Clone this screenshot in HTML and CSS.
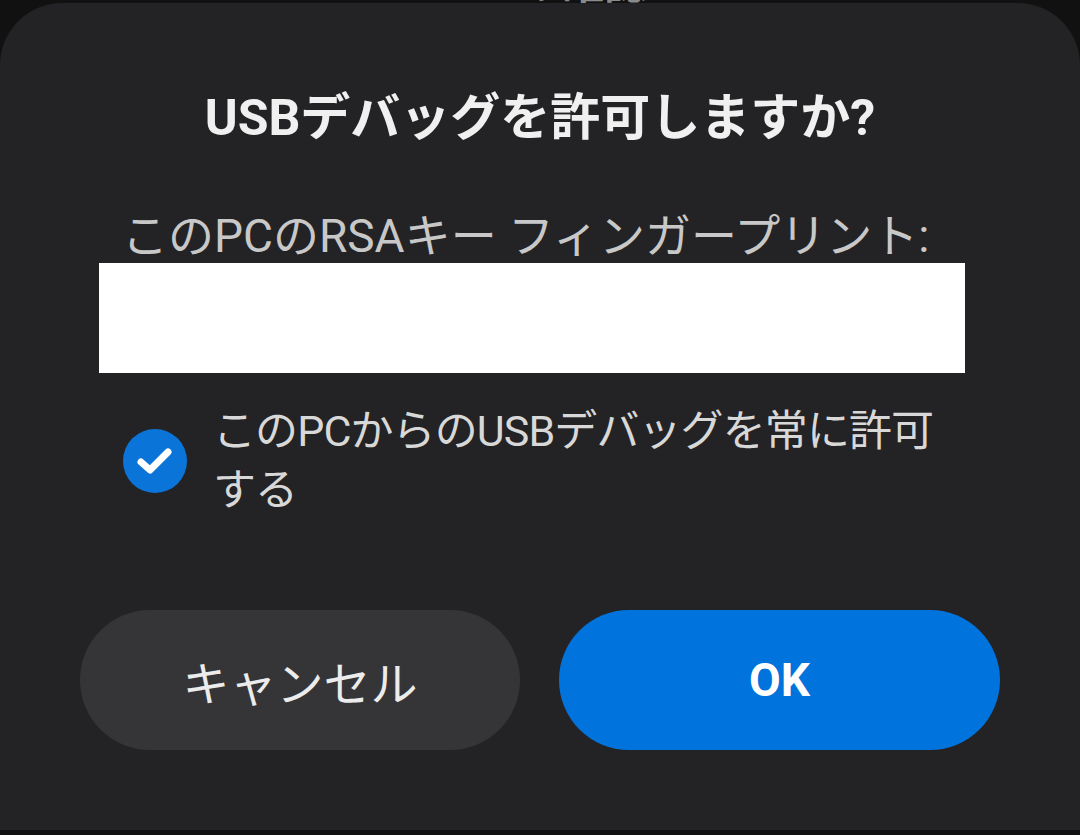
FILE: index.html
```html
<!DOCTYPE html>
<html lang="ja">
<head>
<meta charset="utf-8">
<link rel="stylesheet" href="styles.css">
</head>
<body>
<div class="behind"><span class="behind-text">USBの確認</span></div>
<div class="dialog">
  <h1 class="title">USBデバッグを許可しますか?</h1>
  <p class="body-text">このPCのRSAキー フィンガープリント:</p>
  <div class="redact"></div>
  <div class="check-row">
    <span class="check">
      <svg width="64" height="64" viewBox="0 0 64 64">
        <circle cx="32" cy="32" r="32" fill="#0a74d9"/>
        <path d="M18 33 L27 41 L45 23" fill="none" stroke="#fff" stroke-width="7" stroke-linecap="round" stroke-linejoin="round"/>
      </svg>
    </span>
    <span class="check-label">このPCからのUSBデバッグを常に許可する</span>
  </div>
  <div class="buttons">
    <button class="btn btn-cancel">キャンセル</button>
    <button class="btn btn-ok">OK</button>
  </div>
</div>
</body>
</html>
```

FILE: styles.css
```css
html, body {
  margin: 0;
  padding: 0;
  background: #111111;
  width: 1080px;
  height: 835px;
  overflow: hidden;
  font-family: Roboto, "Noto Sans CJK JP", sans-serif;
}
.behind {
  height: 3px;
  overflow: hidden;
  display: flex;
  justify-content: center;
}
.behind-text {
  display: block;
  margin-top: -38px;
  font-size: 44px;
  line-height: 44px;
  color: #8a8a8a;
  font-weight: 700;
}
.dialog {
  background: #232325;
  height: 827px;
  border-radius: 62px 62px 0 0;
  box-sizing: border-box;
  padding-top: 85px;
}
.title {
  margin: 0;
  text-align: center;
  font-size: 50px;
  line-height: 60px;
  font-weight: 700;
  color: #f0f0f0;
}
.body-text {
  margin: 61px 0 0 0;
  padding-left: 122px;
  font-size: 46px;
  line-height: 54px;
  color: #c8c8c8;
}
.redact {
  margin: 0 0 0 99px;
  width: 866px;
  height: 110px;
  background: #ffffff;
}
.check-row {
  display: flex;
  align-items: center;
  margin-top: 29px;
  padding-left: 123px;
}
.check {
  width: 64px;
  height: 64px;
  flex: none;
  display: block;
}
.check svg { display: block; }
.check-label {
  margin-left: 26px;
  width: 745px;
  font-size: 43px;
  line-height: 59px;
  color: #d8d8d8;
  letter-spacing: -0.9px;
}
.buttons {
  display: flex;
  gap: 39px;
  margin-top: 90px;
  padding-left: 80px;
}
.btn {
  width: 440px;
  height: 140px;
  border: none;
  border-radius: 70px;
  font-family: inherit;
  font-size: 47px;
  padding: 0;
}
.btn-cancel {
  background: #353537;
  color: #ececec;
}
.btn-ok {
  background: #0074dc;
  color: #ffffff;
  font-weight: 700;
  font-size: 46px;
  width: 441px;
}
```
